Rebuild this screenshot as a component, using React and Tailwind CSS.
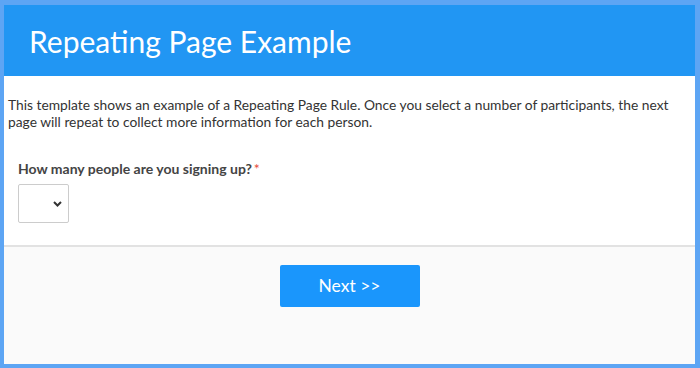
export default function App() {
  return (
    <div className="w-[700px] h-[368px] bg-[#5da5f4] p-[4px] pt-[5px] pr-[5px] font-['Lato','Open_Sans',sans-serif]">
      <div className="flex flex-col h-full bg-white">
        {/* Header */}
        <div className="h-[71px] bg-[#2196f3] flex items-center px-[25px]">
          <h1 className="text-[30px] text-white leading-none">Repeating Page Example</h1>
        </div>

        {/* Body */}
        <div className="pt-[20px] pb-[22px] pl-[4px] pr-[8px]">
          <p className="text-[13.8px] leading-[17px] text-[#333]">
            This template shows an example of a Repeating Page Rule. Once you select a number of participants, the next page will repeat to collect more information for each person.
          </p>
          <div className="px-[10px] mt-[30px]">
            <label className="block text-[14px] font-bold text-[#444] leading-[18px]">
              How many people are you signing up?<span className="text-[#e74c3c] font-normal ml-[2px]">*</span>
            </label>
            <div className="relative mt-[6px] w-[51px] h-[39px] border border-[#ccc] rounded-[2px] bg-white">
              <svg className="absolute right-[6px] top-[16px]" width="9" height="6" viewBox="0 0 9 6">
                <path d="M1 1l3.5 3.5L8 1" fill="none" stroke="#333" strokeWidth="2" />
              </svg>
            </div>
          </div>
        </div>

        {/* Footer */}
        <div className="flex-1 bg-[#fafafa] border-t-2 border-[#e2e2e2] flex justify-center pt-[18px]">
          <button className="w-[140px] h-[42px] bg-[#1a96fc] rounded-[2px] text-white text-[17.5px]">
            Next &gt;&gt;
          </button>
        </div>
      </div>
    </div>
  );
}
